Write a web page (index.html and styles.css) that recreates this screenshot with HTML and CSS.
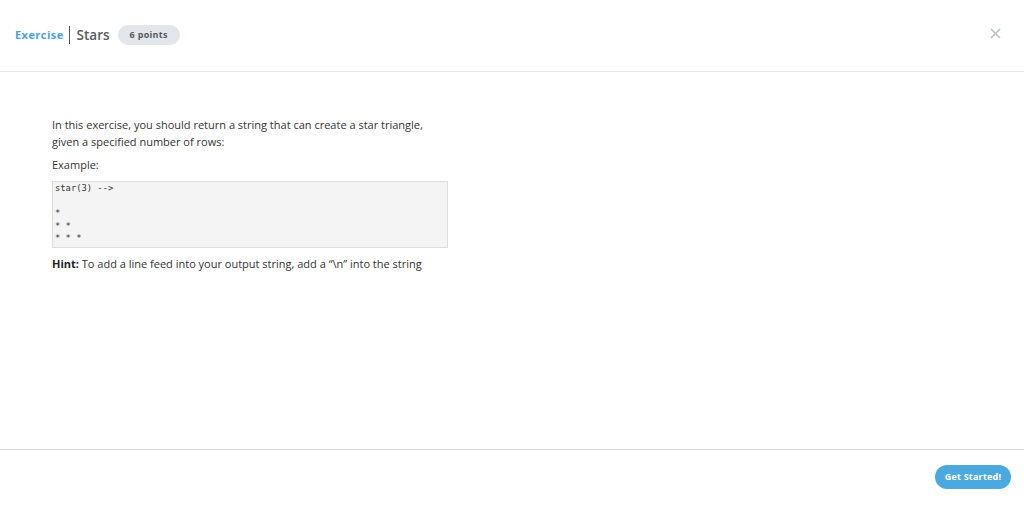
FILE: index.html
```html
<!DOCTYPE html>
<html>
<head>
<meta charset="utf-8">
<link rel="stylesheet" href="styles.css">
</head>
<body>
<div class="modal">
  <header class="head">
    <div class="title">
      <span class="kind">Exercise</span>
      <span class="sep"></span>
      <span class="name">Stars</span>
      <span class="badge">6 points</span>
    </div>
    <button class="close" aria-label="Close">
      <svg width="11" height="11" viewBox="0 0 11 11"><path d="M1 1L10 10M10 1L1 10" stroke="#b7bfc7" stroke-width="1.6" fill="none"/></svg>
    </button>
  </header>
  <main class="body">
    <p class="para">In this exercise, you should return a string that can create a star triangle,<br>given a specified number of rows:</p>
    <p class="para ex">Example:</p>
    <pre class="code">star(3) -->

*
* *
* * *</pre>
    <p class="para hint"><b>Hint:</b> To add a line feed into your output string, add a “\n” into the string</p>
  </main>
  <footer class="foot">
    <button class="go">Get Started!</button>
  </footer>
</div>
</body>
</html>
```
FILE: styles.css
```css
html, body {
  margin: 0;
  padding: 0;
  background: #fff;
}
.modal {
  width: 1024px;
  height: 505px;
  display: flex;
  flex-direction: column;
  font-family: "Open Sans", "Liberation Sans", sans-serif;
}
.head {
  height: 72px;
  flex: none;
  border-bottom: 1px solid #e6e6e6;
  display: flex;
  align-items: center;
  justify-content: space-between;
  padding: 0 23px 0 15px;
  box-sizing: border-box;
}
.title {
  display: flex;
  align-items: center;
  margin-top: -2px;
}
.kind {
  color: #4aa3df;
  font-weight: 700;
  font-size: 11px;
  letter-spacing: 0.45px;
}
.sep {
  width: 1px;
  height: 18px;
  background: #555;
  margin: 0 7px 0 5px;
}
.name {
  color: #555a60;
  font-size: 13.5px;
  font-weight: 600;
}
.badge {
  margin-left: 8px;
  background: #e3e6ea;
  color: #555a60;
  font-size: 9px;
  font-weight: 700;
  letter-spacing: 0.3px;
  border-radius: 10px;
  padding: 0 12px;
  height: 20px;
  line-height: 20px;
}
.close {
  border: 0;
  background: none;
  padding: 0;
  width: 11px;
  height: 11px;
  display: block;
  margin-top: -5px;
}
.close svg { display: block; }
.body {
  flex: 1;
  padding: 44px 0 0 52px;
  color: #333;
  font-size: 11px;
}
.para {
  margin: 0;
  line-height: 17px;
}
.ex { margin-top: 6px; }
.code {
  margin: 8px 0 0;
  width: 396px;
  box-sizing: border-box;
  height: 67px;
  background: #f4f4f4;
  border: 1px solid #dedede;
  font-family: "DejaVu Sans Mono", monospace;
  font-size: 8.8px;
  line-height: 12.5px;
  padding: 0 2px;
  color: #333;
}
.hint { margin-top: 7px; }
.hint b { font-weight: 700; color: #222; }
.foot {
  height: 56px;
  flex: none;
  box-sizing: border-box;
  border-top: 1px solid #d6d6d6;
  display: flex;
  align-items: center;
  justify-content: flex-end;
  padding: 0 13px 2px 0;
}
.go {
  background: #4ca9df;
  color: #fff;
  border: 0;
  border-radius: 12px;
  height: 24px;
  width: 76px;
  padding: 0;
  font-family: "Open Sans", "Liberation Sans", sans-serif;
  font-size: 9px;
  font-weight: 700;
  letter-spacing: 0.2px;
}
```
